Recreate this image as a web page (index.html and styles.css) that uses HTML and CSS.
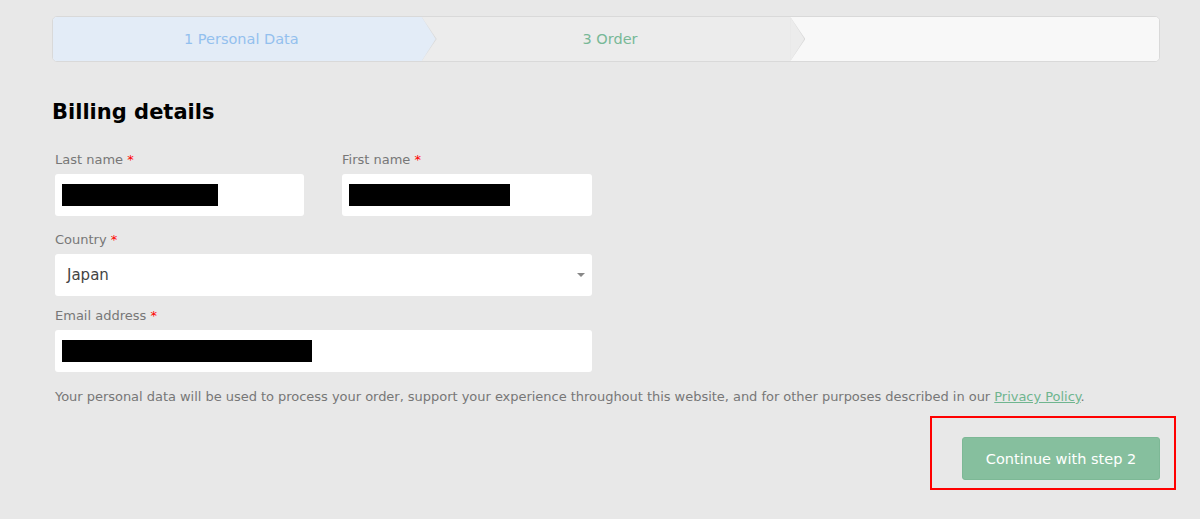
FILE: index.html
```html
<!DOCTYPE html>
<html lang="en">
<head>
<meta charset="utf-8">
<title>Billing details</title>
<link rel="stylesheet" href="styles.css">
</head>
<body>
<div class="page">
  <div class="steps">
    <div class="step step-active"><span>1 Personal Data</span></div>
    <div class="step step-next"><span>3 Order</span></div>
    <div class="step step-last"></div>
  </div>

  <h2 class="title">Billing details</h2>

  <form class="form">
    <div class="grid">
      <div class="field">
        <label class="label">Last name <span class="req">*</span></label>
        <div class="input"><span class="redact redact-last"></span></div>
      </div>
      <div class="field">
        <label class="label">First name <span class="req">*</span></label>
        <div class="input"><span class="redact redact-first"></span></div>
      </div>
      <div class="field wide row-country">
        <label class="label">Country <span class="req">*</span></label>
        <div class="input select"><span class="value">Japan</span><span class="caret"></span></div>
      </div>
      <div class="field wide row-email">
        <label class="label">Email address <span class="req">*</span></label>
        <div class="input"><span class="redact redact-email"></span></div>
      </div>
    </div>
    <p class="note">Your personal data will be used to process your order, support your experience throughout this website, and for other purposes described in our <a href="#" class="link">Privacy Policy</a>.</p>
  </form>

  <div class="actions">
    <div class="highlight">
      <button type="button" class="btn">Continue with step 2</button>
    </div>
  </div>
</div>
</body>
</html>
```

FILE: styles.css
```css
html, body {
  margin: 0;
  padding: 0;
  background: #e8e8e8;
}
body {
  font-family: "DejaVu Sans", Verdana, sans-serif;
  color: #777;
}
.page {
  width: 1108px;
  padding: 16px 0 0 52px;
}
.steps {
  display: flex;
  height: 44px;
  border: 1px solid #d9d9d9;
  border-radius: 5px;
  background: #f8f8f8;
}
.step {
  position: relative;
  flex: 1;
  display: flex;
  align-items: center;
  justify-content: center;
  font-size: 14.5px;
}
.step-active {
  background: #e3ecf7;
  color: #93c0ee;
  border-radius: 4px 0 0 4px;
}
.step-next {
  background: #ececec;
  color: #78b897;
}
.step-last {
  background: #f8f8f8;
  border-radius: 0 4px 4px 0;
}
.step-active::before,
.step-next::before {
  content: "";
  position: absolute;
  top: 0;
  right: -15px;
  width: 15px;
  height: 100%;
  background: #d9d9d9;
  clip-path: polygon(0 0, 100% 50%, 0 100%);
  z-index: 1;
}
.step-active::after,
.step-next::after {
  content: "";
  position: absolute;
  top: 0;
  right: -14px;
  width: 14px;
  height: 100%;
  clip-path: polygon(0 0, 100% 50%, 0 100%);
  z-index: 2;
}
.step-active::after { background: #e3ecf7; }
.step-next::after { background: #ececec; }
.step span { margin-left: 8px; }

.title {
  margin: 36px 0 0;
  font-size: 21px;
  font-weight: bold;
  color: #000;
  line-height: 28px;
}
.form {
  width: 537px;
  padding-left: 3px;
  margin-top: 25px;
}
.grid {
  display: grid;
  grid-template-columns: 249px 250px;
  column-gap: 38px;
}
.wide { grid-column: 1 / -1; }
.row-country { margin-top: 15px; }
.row-email { margin-top: 11px; }
.label {
  display: block;
  font-size: 13px;
  line-height: 18px;
  color: #777;
  margin-bottom: 5px;
}
.req { color: #f00; }
.input {
  position: relative;
  height: 42px;
  background: #fff;
  border-radius: 3px;
  display: flex;
  align-items: center;
  padding-left: 7px;
}
.redact {
  display: block;
  height: 22px;
  background: #000;
}
.redact-last { width: 156px; }
.redact-first { width: 161px; }
.redact-email { width: 250px; }
.select { padding-left: 12px; }
.value {
  font-size: 15px;
  color: #444;
}
.caret {
  position: absolute;
  right: 7px;
  top: 19px;
  width: 0;
  height: 0;
  border-left: 4px solid transparent;
  border-right: 4px solid transparent;
  border-top: 4px solid #888;
}
.note {
  margin: 16px 0 0;
  font-size: 13px;
  line-height: 18px;
  letter-spacing: -0.03px;
  color: #777;
  white-space: nowrap;
}
.link {
  color: #6fb58f;
  text-decoration: underline;
}
.actions {
  display: flex;
  justify-content: flex-end;
  margin-top: 10px;
  margin-right: -16px;
}
.highlight {
  border: 2px solid #f00;
  padding: 19px 14px 8px 30px;
}
.btn {
  width: 198px;
  height: 43px;
  background: #86bf9e;
  border: 1px solid #7db896;
  border-radius: 3px;
  color: #fff;
  font-family: "DejaVu Sans", Verdana, sans-serif;
  font-size: 14.5px;
  padding: 0;
}
```
